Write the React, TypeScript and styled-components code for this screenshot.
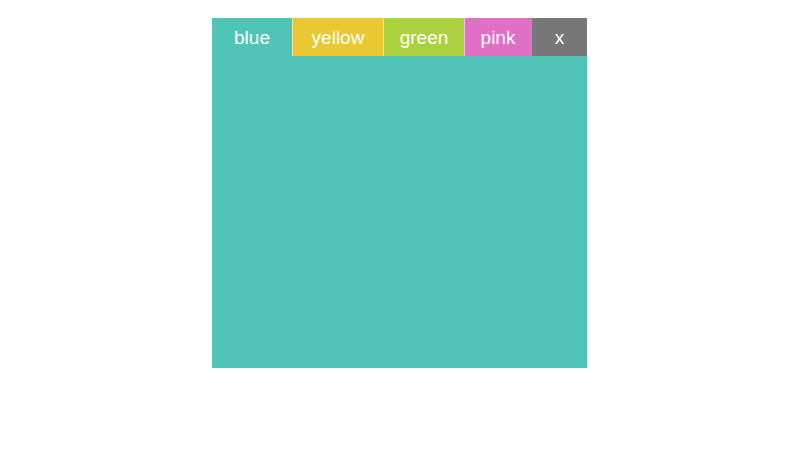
import React, { useState } from "react";
import styled, { createGlobalStyle } from "styled-components";

const GlobalStyle = createGlobalStyle`
  body {
    margin: 0;
    background: #ffffff;
    font-family: "Liberation Sans", Arial, sans-serif;
  }
`;

const tabs = [
  { name: "blue", color: "#50c4b7", width: 80 },
  { name: "yellow", color: "#e9c834", width: 91 },
  { name: "green", color: "#aad23f", width: 81 },
  { name: "pink", color: "#e070c6", width: 67 },
];

const Page = styled.div`
  display: flex;
  justify-content: center;
  padding: 18px 1px 0 0;
`;

const Panel = styled.div<{ bg: string }>`
  width: 375px;
  height: 350px;
  display: flex;
  flex-direction: column;
  background-color: ${(props) => props.bg};
`;

const TabBar = styled.div`
  display: flex;
  height: 38px;
`;

const Tab = styled.div<{ bg: string; w: number; first?: boolean }>`
  box-sizing: border-box;
  width: ${(props) => props.w}px;
  display: flex;
  align-items: center;
  justify-content: center;
  padding-top: 2px;
  background-color: ${(props) => props.bg};
  border-left: ${(props) =>
    props.first ? "none" : "1px solid rgba(255, 255, 255, 0.55)"};
  color: #ffffff;
  font-size: 19px;
  cursor: pointer;
`;

const CloseTab = styled.div`
  box-sizing: border-box;
  flex: 1;
  display: flex;
  align-items: center;
  justify-content: center;
  padding-top: 2px;
  background-color: #777777;
  border-left: 1px solid rgba(255, 255, 255, 0.3);
  color: #ffffff;
  font-size: 19px;
  cursor: pointer;
`;

export default function App() {
  const [active, setActive] = useState(0);
  return (
    <>
      <GlobalStyle />
      <Page>
        <Panel bg={tabs[active].color}>
          <TabBar>
            {tabs.map((t, i) => (
              <Tab
                key={t.name}
                bg={t.color}
                w={t.width}
                first={i === 0}
                onClick={() => setActive(i)}
              >
                {t.name}
              </Tab>
            ))}
            <CloseTab>x</CloseTab>
          </TabBar>
        </Panel>
      </Page>
    </>
  );
}
